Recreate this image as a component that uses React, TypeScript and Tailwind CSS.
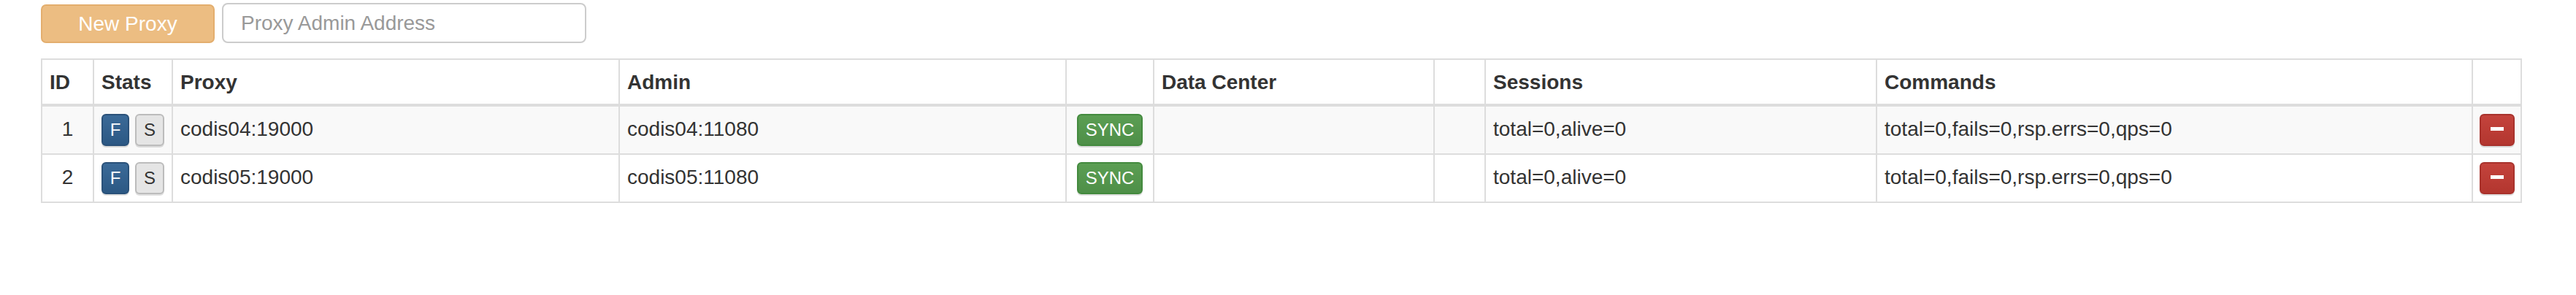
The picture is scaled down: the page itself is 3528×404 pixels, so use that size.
import React from "react";

const COLS = [
  "w-[71px]",
  "w-[108px]",
  "w-[612px]",
  "w-[612px]",
  "w-[120px]",
  "w-[384px]",
  "w-[70px]",
  "w-[536px]",
  "w-[816px]",
  "w-[69px]",
];

const PROXIES = [
  {
    id: 1,
    proxy: "codis04:19000",
    admin: "codis04:11080",
    sessions: "total=0,alive=0",
    commands: "total=0,fails=0,rsp.errs=0,qps=0",
  },
  {
    id: 2,
    proxy: "codis05:19000",
    admin: "codis05:11080",
    sessions: "total=0,alive=0",
    commands: "total=0,fails=0,rsp.errs=0,qps=0",
  },
];

const th = "border-l-2 border-t-2 border-b-4 border-[#dddddd] pt-[10px] pb-[8px] px-[10px] leading-[42px] font-bold text-left align-bottom";
const td = "border-l-2 border-b-2 border-[#dddddd] p-[10px] leading-[42px] align-top";

function XsButton({ className, children }: { className: string; children: React.ReactNode }) {
  return (
    <span
      className={`inline-flex h-[44px] items-center justify-center rounded-[6px] border-2 align-top text-[24px] leading-[36px] shadow-[0_2px_0_rgba(0,0,0,0.12)] ${className}`}
    >
      {children}
    </span>
  );
}

export default function App() {
  return (
    <div
      className="h-[404px] overflow-hidden bg-white text-[28px] text-[#333333]"
      style={{ fontFamily: '"Liberation Sans", Arial, Helvetica, sans-serif' }}
    >
      {/* Toolbar */}
      <div className="flex items-end gap-[10px] pl-[56px] pt-[4px]">
        <button
          type="button"
          className="h-[53px] w-[238px] rounded-[7px] border-2 border-[#e3ae6e] bg-[#ecbd82] text-[28px] text-white"
        >
          New Proxy
        </button>
        <input
          type="text"
          placeholder="Proxy Admin Address"
          className="h-[55px] w-[499px] rounded-[8px] border-2 border-[#cccccc] px-[24px] text-[28px] outline-none placeholder:text-[#999999]"
        />
      </div>

      {/* Proxy table */}
      <table className="ml-[56px] mt-[21px] w-[3398px] table-fixed border-separate border-spacing-0">
        <colgroup>
          {COLS.map((c, i) => (
            <col key={i} className={c} />
          ))}
        </colgroup>
        <thead>
          <tr>
            <th className={`${th} text-center`}>ID</th>
            <th className={`${th} text-center`}>Stats</th>
            <th className={th}>Proxy</th>
            <th className={th}>Admin</th>
            <th className={th}></th>
            <th className={th}>Data Center</th>
            <th className={th}></th>
            <th className={th}>Sessions</th>
            <th className={th}>Commands</th>
            <th className={`${th} border-r-2`}></th>
          </tr>
        </thead>
        <tbody>
          {PROXIES.map((p, i) => (
            <tr key={p.id} className={i % 2 === 0 ? "bg-[#f9f9f9]" : "bg-white"}>
              <td className={`${td} text-center`}>{p.id}</td>
              <td className={`${td} text-center`}>
                <div className="flex justify-center gap-[8px]">
                  <XsButton className="w-[38px] border-[#2a5179] bg-linear-to-b from-[#3b6a98] to-[#2c5884] text-white">
                    F
                  </XsButton>
                  <XsButton className="w-[40px] border-[#bcbcbc] bg-[#e5e5e5] text-[#333333]">
                    S
                  </XsButton>
                </div>
              </td>
              <td className={td}>{p.proxy}</td>
              <td className={td}>{p.admin}</td>
              <td className={`${td} text-center`}>
                <XsButton className="w-[90px] border-[#438a3e] bg-linear-to-b from-[#5b9e53] to-[#4e8f48] text-white">
                  SYNC
                </XsButton>
              </td>
              <td className={td}></td>
              <td className={td}></td>
              <td className={td}>{p.sessions}</td>
              <td className={td}>{p.commands}</td>
              <td className={`${td} border-r-2 px-[8px] text-center`}>
                <XsButton className="w-[48px] border-[#a8322c] bg-linear-to-b from-[#c4433c] to-[#b3362f]">
                  <span className="mb-[3px] block h-[5px] w-[18px] bg-white" />
                </XsButton>
              </td>
            </tr>
          ))}
        </tbody>
      </table>
    </div>
  );
}
